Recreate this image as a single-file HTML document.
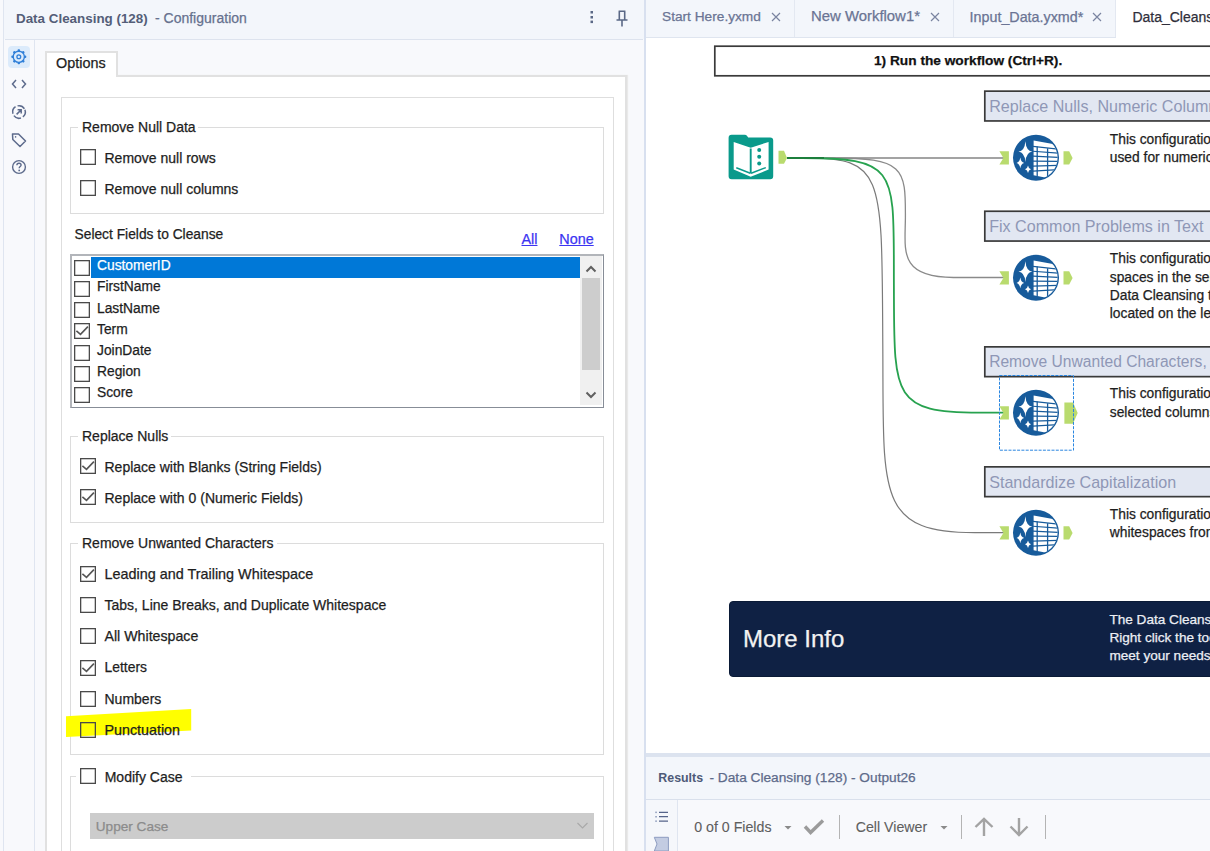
<!DOCTYPE html>
<html><head><meta charset="utf-8">
<style>
html,body{margin:0;padding:0;}
body{width:1210px;height:851px;overflow:hidden;position:relative;background:#fff;font-family:"Liberation Sans",sans-serif;}
.a{position:absolute;}
.t{position:absolute;line-height:1;white-space:nowrap;-webkit-text-stroke:0.25px currentColor;}
svg{overflow:visible;}
</style></head><body>
<div class="a" style="left:0px;top:0px;width:644px;height:851px;background:#f8f9fc;"></div>
<div class="a" style="left:3px;top:0px;width:1px;height:851px;background:#dfe5f0;"></div>
<div class="a" style="left:4px;top:0px;width:640px;height:39px;background:#f3f6fb;"></div>
<div class="a" style="left:5px;top:39px;width:638px;height:1px;background:#dde3ee;"></div>
<div class="t" style="left:16px;top:11.66px;font-size:13.4px;color:#545e78;font-weight:bold;-webkit-text-stroke:0;">Data Cleansing (128)</div>
<div class="t" style="left:155px;top:11.15px;font-size:14px;color:#66718e;">- Configuration</div>
<svg class="a" style="left:588px;top:8px" width="8" height="18" viewBox="0 0 8 18"><rect x="2.5" y="3" width="2.5" height="2.5" fill="#5a6886"/><rect x="2.5" y="8" width="2.5" height="2.5" fill="#5a6886"/><rect x="2.5" y="12.6" width="2.5" height="2.5" fill="#5a6886"/></svg>
<svg class="a" style="left:614px;top:8px" width="16" height="22" viewBox="0 0 16 22"><path d="M4.6 3.2 H11.4 M5.3 3.2 V11.5 M10.7 3.2 V11.5 M2.5 12 H13.5 M8 12 V18.4" stroke="#5a6886" stroke-width="1.6" fill="none"/></svg>
<div class="a" style="left:34px;top:40px;width:1px;height:811px;background:#dfe5f0;"></div>
<div class="a" style="left:8px;top:46px;width:22px;height:22px;background:#dcebfb;border-radius:4px;"></div>
<svg class="a" style="left:10px;top:48px" width="18" height="18" viewBox="-9 -9 18 18"><g transform="translate(-0.2,-0.2)"><circle cx="0" cy="0" r="5.6" fill="none" stroke="#2f7fd8" stroke-width="1.35"/><rect x="-1.25" y="-7.5" width="2.5" height="2.3" rx="1" fill="#2f7fd8" transform="rotate(0)"/><rect x="-1.25" y="-7.5" width="2.5" height="2.3" rx="1" fill="#2f7fd8" transform="rotate(45)"/><rect x="-1.25" y="-7.5" width="2.5" height="2.3" rx="1" fill="#2f7fd8" transform="rotate(90)"/><rect x="-1.25" y="-7.5" width="2.5" height="2.3" rx="1" fill="#2f7fd8" transform="rotate(135)"/><rect x="-1.25" y="-7.5" width="2.5" height="2.3" rx="1" fill="#2f7fd8" transform="rotate(180)"/><rect x="-1.25" y="-7.5" width="2.5" height="2.3" rx="1" fill="#2f7fd8" transform="rotate(225)"/><rect x="-1.25" y="-7.5" width="2.5" height="2.3" rx="1" fill="#2f7fd8" transform="rotate(270)"/><rect x="-1.25" y="-7.5" width="2.5" height="2.3" rx="1" fill="#2f7fd8" transform="rotate(315)"/><circle cx="0" cy="0" r="1.9" fill="none" stroke="#2f7fd8" stroke-width="1.3"/></g></svg>
<svg class="a" style="left:10px;top:76px" width="18" height="16" viewBox="0 0 18 16"><path d="M6 4 L2.5 8 L6 12 M12 4 L15.5 8 L12 12" fill="none" stroke="#5d6b8c" stroke-width="1.5"/></svg>
<svg class="a" style="left:10px;top:103px" width="18" height="18" viewBox="0 0 18 18"><circle cx="9" cy="9" r="6.3" fill="none" stroke="#5d6b8c" stroke-width="1.5" stroke-dasharray="7.6 2.3" transform="rotate(-20 9 9)"/><path d="M6.6 11.4 L11 7 M7.6 6.8 H11.2 V10.4" fill="none" stroke="#5d6b8c" stroke-width="1.5"/></svg>
<svg class="a" style="left:10px;top:131px" width="18" height="18" viewBox="0 0 18 18"><path d="M2.5 3 L8.5 3 L15.5 10 L10 15.5 L2.8 8.5 Z" fill="none" stroke="#5d6b8c" stroke-width="1.5" stroke-linejoin="round"/><circle cx="5.6" cy="5.9" r="0.8" fill="#5d6b8c"/></svg>
<svg class="a" style="left:10px;top:158px" width="18" height="18" viewBox="0 0 18 18"><circle cx="9" cy="9" r="6.4" fill="none" stroke="#5d6b8c" stroke-width="1.4"/><path d="M6.9 7.2 C6.9 5.9 7.8 5.2 9 5.2 C10.2 5.2 11.1 6 11.1 7.1 C11.1 8.5 9.2 8.6 9.2 10.2" fill="none" stroke="#5d6b8c" stroke-width="1.4"/><circle cx="9.2" cy="12.4" r="0.9" fill="#5d6b8c"/></svg>
<div class="a" style="left:45px;top:75px;width:582px;height:800px;background:#fff;border:2px solid #e1e1e1;box-sizing:border-box;box-shadow:1px 0 1px #e9e9e9;"></div>
<div class="a" style="left:45px;top:51px;width:73px;height:26px;background:#fff;border:2px solid #e1e1e1;border-bottom:none;box-sizing:border-box;"></div>
<div class="t" style="left:56px;top:55.81px;font-size:14.4px;color:#1e1e1e;">Options</div>
<div class="a" style="left:61px;top:97px;width:553px;height:800px;background:#fff;border:1px solid #dedede;box-sizing:border-box;"></div>
<div class="a" style="left:70px;top:127px;width:534px;height:87px;border:1px solid #dcdcdc;box-sizing:border-box;"></div>
<div class="a" style="left:78px;top:126px;width:120px;height:3px;background:#fff;"></div>
<div class="t" style="left:82px;top:119.65px;font-size:14px;color:#1e1e1e;">Remove Null Data</div>
<svg class="a" style="left:80px;top:149px" width="16" height="16" viewBox="0 0 16 16"><rect x="0.65" y="0.65" width="14.7" height="14.7" fill="none" stroke="#4a4a4a" stroke-width="1.3"/></svg>
<div class="t" style="left:104.5px;top:151.15px;font-size:14px;color:#1e1e1e;">Remove null rows</div>
<svg class="a" style="left:80px;top:180px" width="16" height="16" viewBox="0 0 16 16"><rect x="0.65" y="0.65" width="14.7" height="14.7" fill="none" stroke="#4a4a4a" stroke-width="1.3"/></svg>
<div class="t" style="left:104.5px;top:182.15px;font-size:14px;color:#1e1e1e;">Remove null columns</div>
<div class="t" style="left:74.5px;top:227.82px;font-size:13.8px;color:#1e1e1e;">Select Fields to Cleanse</div>
<div class="t" style="left:521.5px;top:231.61px;font-size:14.4px;color:#3b34f2;text-decoration:underline;">All</div>
<div class="t" style="left:559.3px;top:231.61px;font-size:14.4px;color:#3b34f2;text-decoration:underline;">None</div>
<div class="a" style="left:70px;top:254px;width:534px;height:154px;background:#fff;border-top:2px solid #b2b5ba;border-left:2px solid #b2b5ba;border-right:1px solid #878d97;border-bottom:1px solid #878d97;box-sizing:border-box;"></div>
<div class="a" style="left:91px;top:257px;width:489px;height:21px;background:#0078d7;"></div>
<svg class="a" style="left:74px;top:260px" width="16" height="16" viewBox="0 0 16 16"><rect x="0.65" y="0.65" width="14.7" height="14.7" fill="none" stroke="#4a4a4a" stroke-width="1.3"/></svg>
<div class="t" style="left:97px;top:259.32px;font-size:13.8px;color:#fff;">CustomerID</div>
<svg class="a" style="left:74px;top:281.15px" width="16" height="16" viewBox="0 0 16 16"><rect x="0.65" y="0.65" width="14.7" height="14.7" fill="none" stroke="#4a4a4a" stroke-width="1.3"/></svg>
<div class="t" style="left:97px;top:280.47px;font-size:13.8px;color:#1e1e1e;">FirstName</div>
<svg class="a" style="left:74px;top:302.3px" width="16" height="16" viewBox="0 0 16 16"><rect x="0.65" y="0.65" width="14.7" height="14.7" fill="none" stroke="#4a4a4a" stroke-width="1.3"/></svg>
<div class="t" style="left:97px;top:301.62px;font-size:13.8px;color:#1e1e1e;">LastName</div>
<svg class="a" style="left:74px;top:323.45px" width="16" height="16" viewBox="0 0 16 16"><rect x="0.65" y="0.65" width="14.7" height="14.7" fill="none" stroke="#4a4a4a" stroke-width="1.3"/><path d="M2.4 7.8 L6.5 11.3 L13.9 3.6" fill="none" stroke="#555" stroke-width="1.6"/></svg>
<div class="t" style="left:97px;top:322.77px;font-size:13.8px;color:#1e1e1e;">Term</div>
<svg class="a" style="left:74px;top:344.6px" width="16" height="16" viewBox="0 0 16 16"><rect x="0.65" y="0.65" width="14.7" height="14.7" fill="none" stroke="#4a4a4a" stroke-width="1.3"/></svg>
<div class="t" style="left:97px;top:343.92px;font-size:13.8px;color:#1e1e1e;">JoinDate</div>
<svg class="a" style="left:74px;top:365.75px" width="16" height="16" viewBox="0 0 16 16"><rect x="0.65" y="0.65" width="14.7" height="14.7" fill="none" stroke="#4a4a4a" stroke-width="1.3"/></svg>
<div class="t" style="left:97px;top:365.07px;font-size:13.8px;color:#1e1e1e;">Region</div>
<svg class="a" style="left:74px;top:386.9px" width="16" height="16" viewBox="0 0 16 16"><rect x="0.65" y="0.65" width="14.7" height="14.7" fill="none" stroke="#4a4a4a" stroke-width="1.3"/></svg>
<div class="t" style="left:97px;top:386.22px;font-size:13.8px;color:#1e1e1e;">Score</div>
<div class="a" style="left:580px;top:256px;width:21.5px;height:149px;background:#f0f0f0;"></div>
<div class="a" style="left:582px;top:278px;width:18px;height:92px;background:#cdcdcd;"></div>
<svg class="a" style="left:584px;top:263px" width="14" height="12" viewBox="0 0 14 12"><path d="M2.5 8.5 L7 4 L11.5 8.5" fill="none" stroke="#606060" stroke-width="2"/></svg>
<svg class="a" style="left:584px;top:389px" width="14" height="12" viewBox="0 0 14 12"><path d="M2.5 3.5 L7 8 L11.5 3.5" fill="none" stroke="#606060" stroke-width="2"/></svg>
<div class="a" style="left:70px;top:436px;width:534px;height:87px;border:1px solid #dcdcdc;box-sizing:border-box;"></div>
<div class="a" style="left:78px;top:435px;width:93px;height:3px;background:#fff;"></div>
<div class="t" style="left:82px;top:429.15px;font-size:14px;color:#1e1e1e;">Replace Nulls</div>
<svg class="a" style="left:80px;top:458px" width="16" height="16" viewBox="0 0 16 16"><rect x="0.65" y="0.65" width="14.7" height="14.7" fill="none" stroke="#4a4a4a" stroke-width="1.3"/><path d="M2.4 7.8 L6.5 11.3 L13.9 3.6" fill="none" stroke="#555" stroke-width="1.6"/></svg>
<div class="t" style="left:104.5px;top:459.65px;font-size:14px;color:#1e1e1e;">Replace with Blanks (String Fields)</div>
<svg class="a" style="left:80px;top:489px" width="16" height="16" viewBox="0 0 16 16"><rect x="0.65" y="0.65" width="14.7" height="14.7" fill="none" stroke="#4a4a4a" stroke-width="1.3"/><path d="M2.4 7.8 L6.5 11.3 L13.9 3.6" fill="none" stroke="#555" stroke-width="1.6"/></svg>
<div class="t" style="left:104.5px;top:490.65px;font-size:14px;color:#1e1e1e;">Replace with 0 (Numeric Fields)</div>
<div class="a" style="left:70px;top:543px;width:534px;height:212px;border:1px solid #dcdcdc;box-sizing:border-box;"></div>
<div class="a" style="left:78px;top:542px;width:199px;height:3px;background:#fff;"></div>
<div class="t" style="left:82px;top:536.15px;font-size:14px;color:#1e1e1e;">Remove Unwanted Characters</div>
<svg class="a" style="left:0;top:0" width="300" height="851"><path d="M66 716.3 L191.2 708.9 L191.2 730.5 L66 736.9 Z" fill="#ffff00"/></svg>
<svg class="a" style="left:80px;top:566px" width="16" height="16" viewBox="0 0 16 16"><rect x="0.65" y="0.65" width="14.7" height="14.7" fill="none" stroke="#4a4a4a" stroke-width="1.3"/><path d="M2.4 7.8 L6.5 11.3 L13.9 3.6" fill="none" stroke="#555" stroke-width="1.6"/></svg>
<div class="t" style="left:104.5px;top:566.81px;font-size:14.4px;color:#1e1e1e;">Leading and Trailing Whitespace</div>
<svg class="a" style="left:80px;top:597px" width="16" height="16" viewBox="0 0 16 16"><rect x="0.65" y="0.65" width="14.7" height="14.7" fill="none" stroke="#4a4a4a" stroke-width="1.3"/></svg>
<div class="t" style="left:104.5px;top:598.30px;font-size:14px;color:#1e1e1e;">Tabs, Line Breaks, and Duplicate Whitespace</div>
<svg class="a" style="left:80px;top:628px" width="16" height="16" viewBox="0 0 16 16"><rect x="0.65" y="0.65" width="14.7" height="14.7" fill="none" stroke="#4a4a4a" stroke-width="1.3"/></svg>
<div class="t" style="left:104.5px;top:629.28px;font-size:14.2px;color:#1e1e1e;">All Whitespace</div>
<svg class="a" style="left:80px;top:660px" width="16" height="16" viewBox="0 0 16 16"><rect x="0.65" y="0.65" width="14.7" height="14.7" fill="none" stroke="#4a4a4a" stroke-width="1.3"/><path d="M2.4 7.8 L6.5 11.3 L13.9 3.6" fill="none" stroke="#555" stroke-width="1.6"/></svg>
<div class="t" style="left:104.5px;top:660.68px;font-size:13.9px;color:#1e1e1e;">Letters</div>
<svg class="a" style="left:80px;top:691px" width="16" height="16" viewBox="0 0 16 16"><rect x="0.65" y="0.65" width="14.7" height="14.7" fill="none" stroke="#4a4a4a" stroke-width="1.3"/></svg>
<div class="t" style="left:104.5px;top:691.75px;font-size:14px;color:#1e1e1e;">Numbers</div>
<svg class="a" style="left:80px;top:722px" width="16" height="16" viewBox="0 0 16 16"><rect x="0.65" y="0.65" width="14.7" height="14.7" fill="none" stroke="#4a4a4a" stroke-width="1.3"/></svg>
<div class="t" style="left:104.5px;top:722.65px;font-size:14.3px;color:#1e1e1e;">Punctuation</div>
<div class="a" style="left:70px;top:776px;width:534px;height:200px;border:1px solid #dcdcdc;box-sizing:border-box;"></div>
<div class="a" style="left:76px;top:766px;width:115px;height:20px;background:#fff;"></div>
<svg class="a" style="left:80px;top:768px" width="16" height="16" viewBox="0 0 16 16"><rect x="0.65" y="0.65" width="14.7" height="14.7" fill="none" stroke="#4a4a4a" stroke-width="1.3"/></svg>
<div class="t" style="left:104.7px;top:769.95px;font-size:14px;color:#1e1e1e;">Modify Case</div>
<div class="a" style="left:90px;top:813px;width:504px;height:26px;background:#cccccc;"></div>
<div class="t" style="left:95.8px;top:819.69px;font-size:13.6px;color:#8b8b8b;">Upper Case</div>
<svg class="a" style="left:576px;top:821px" width="13" height="9" viewBox="0 0 13 9"><path d="M1.5 2 L6.5 7 L11.5 2" fill="none" stroke="#a9a9a9" stroke-width="1.2"/></svg>
<div class="a" style="left:644px;top:0px;width:2px;height:851px;background:#d8e0ef;"></div>
<div class="a" style="left:646px;top:0px;width:564px;height:37px;background:#f3f6fb;"></div>
<div class="a" style="left:646px;top:37px;width:470px;height:1px;background:#dfe5ef;"></div>
<div class="a" style="left:1116px;top:0px;width:94px;height:38px;background:#fff;"></div>
<div class="a" style="left:794px;top:0px;width:1px;height:37px;background:#e3e8f1;"></div>
<div class="a" style="left:953px;top:0px;width:1px;height:37px;background:#e3e8f1;"></div>
<div class="a" style="left:1115px;top:0px;width:1px;height:37px;background:#e3e8f1;"></div>
<div class="t" style="left:662px;top:10.20px;font-size:13.7px;color:#6a7494;">Start Here.yxmd</div>
<div class="t" style="left:811px;top:9.19px;font-size:14.9px;color:#6a7494;">New Workflow1*</div>
<div class="t" style="left:969.6px;top:9.70px;font-size:14.3px;color:#6a7494;">Input_Data.yxmd*</div>
<div class="t" style="left:1132.4px;top:9.95px;font-size:14px;color:#2e2e3a;">Data_Cleansing.yxmd</div>
<svg class="a" style="left:770.5px;top:12px" width="10" height="10" viewBox="0 0 10 10"><path d="M1 1 L9 9 M9 1 L1 9" stroke="#7a84a0" stroke-width="1.2"/></svg>
<svg class="a" style="left:929.5px;top:12px" width="10" height="10" viewBox="0 0 10 10"><path d="M1 1 L9 9 M9 1 L1 9" stroke="#7a84a0" stroke-width="1.2"/></svg>
<svg class="a" style="left:1091.5px;top:12px" width="10" height="10" viewBox="0 0 10 10"><path d="M1 1 L9 9 M9 1 L1 9" stroke="#7a84a0" stroke-width="1.2"/></svg>
<div class="a" style="left:646px;top:38px;width:564px;height:715px;background:#fff;"></div>
<svg class="a" style="left:713px;top:44px" width="520" height="34"><rect x="1.8" y="2.2" width="515" height="29.6" fill="#fff" stroke="#3a3a3a" stroke-width="1.7"/></svg>
<div class="t" style="left:874px;top:53.60px;font-size:13.7px;color:#111;font-weight:bold;">1) Run the workflow (Ctrl+R).</div>
<svg class="a" style="left:983px;top:89px" width="260" height="40"><rect x="1.8" y="2.15" width="255" height="29.80" fill="#e2e7f2" stroke="#3a3a3a" stroke-width="1.7"/></svg>
<div class="t" style="left:989.2px;top:98.07px;font-size:16.1px;color:#8f97b6;-webkit-text-stroke:0;">Replace Nulls, Numeric Columns</div>
<svg class="a" style="left:983px;top:209px" width="260" height="40"><rect x="1.8" y="2.25" width="255" height="29.80" fill="#e2e7f2" stroke="#3a3a3a" stroke-width="1.7"/></svg>
<div class="t" style="left:989.2px;top:218.17px;font-size:16.1px;color:#8f97b6;-webkit-text-stroke:0;">Fix Common Problems in Text</div>
<svg class="a" style="left:983px;top:345px" width="260" height="40"><rect x="1.8" y="1.85" width="255" height="29.80" fill="#e2e7f2" stroke="#3a3a3a" stroke-width="1.7"/></svg>
<div class="t" style="left:989.2px;top:354.19px;font-size:15.6px;color:#8f97b6;-webkit-text-stroke:0;">Remove Unwanted Characters, Letters</div>
<svg class="a" style="left:983px;top:465px" width="260" height="40"><rect x="1.8" y="1.85" width="255" height="29.80" fill="#e2e7f2" stroke="#3a3a3a" stroke-width="1.7"/></svg>
<div class="t" style="left:989.2px;top:473.77px;font-size:16.1px;color:#8f97b6;-webkit-text-stroke:0;">Standardize Capitalization</div>
<svg class="a" style="left:0;top:0" width="1210" height="851"><path d="M787 158 L1004 158" stroke="#a3a3a3" stroke-width="2" fill="none"/><path d="M787 158 L830.3 158.0 C904.3 158.0 905.7 167.2 905.4 217.8 C905.2 250.1 898.1 277.5 953.5 277.5 L1004 277.5" stroke="#8a8a8a" stroke-width="1.3" fill="none"/><path d="M787 158 L806.3 158.0 C885.2 158.0 881.7 176.1 882.8 345.4 C883.8 493.1 875.6 532.7 974.6 532.7 L1004 532.7" stroke="#7a7a7a" stroke-width="1.2" fill="none"/><path d="M787 158 L802.0 158.0 C900.1 158.0 893.4 170.0 893.9 285.4 C894.3 395.8 891.1 412.7 979.2 412.7 L1004 412.7" stroke="#27a24f" stroke-width="1.8" fill="none"/><path d="M787 158 L824 158" stroke="#1c7f3c" stroke-width="2" fill="none"/></svg>
<svg class="a" style="left:726px;top:132px" width="50" height="50" viewBox="0 0 50 50"><path d="M2.6 5.8 Q2.6 2.8 5.6 2.8 L18.5 2.8 Q20.3 2.8 21.3 4.2 L22.2 5.6 L44.2 5.6 Q47.2 5.6 47.2 8.6 L47.2 44.2 Q47.2 47.2 44.2 47.2 L5.6 47.2 Q2.6 47.2 2.6 44.2 Z" fill="#0a9a8b"/><path d="M7.7 9.9 L24.7 15.8 L42.6 9.9 L42.6 37.6 L24.7 44.7 L7.7 37.6 Z" fill="#fff"/><path d="M24.7 16.5 V41.5" stroke="#0a9a8b" stroke-width="1.9" fill="none"/><path d="M10.3 35.8 L24.3 41.2 M25.1 41.2 L39.8 35.6" stroke="#0a9a8b" stroke-width="1.5" fill="none"/><circle cx="33.2" cy="18" r="2" fill="#0a9a8b"/><circle cx="33.2" cy="24.8" r="2" fill="#0a9a8b"/><circle cx="33.2" cy="31.4" r="2" fill="#0a9a8b"/></svg>
<svg class="a" style="left:778px;top:150px" width="12" height="16" viewBox="0 0 12 16"><path d="M0.5 0.7 L6 0.7 L9 8 L6 13.7 L0.5 13.7 Z" fill="#b9db6e"/></svg>
<svg class="a" style="left:995px;top:132.5px" width="90" height="50" viewBox="0 0 90 50"><path d="M4.4 18.3 L13.9 18.3 L13.9 31.6 L4.4 31.6 L8.4 25 Z" fill="#b9db6e"/><path d="M68.5 18.3 L74.2 18.3 L77.6 25 L74.2 31.6 L68.5 31.6 Z" fill="#b9db6e"/><circle cx="41" cy="24.8" r="23" fill="#175b9b"/><defs><clipPath id="cc157"><circle cx="41" cy="24.8" r="21.6"/></clipPath></defs><g clip-path="url(#cc157)"><path d="M38.6 7.6 L56.5 10.8 L66 14 L66 40 L50 44.5 L38.6 42.3 Z" fill="#fff"/><path d="M38 13.30 L64 16.20" stroke="#175b9b" stroke-width="1.25"/><path d="M38 18.25 L64 20.25" stroke="#175b9b" stroke-width="1.25"/><path d="M38 23.20 L64 24.30" stroke="#175b9b" stroke-width="1.25"/><path d="M38 28.15 L64 28.35" stroke="#175b9b" stroke-width="1.25"/><path d="M38 33.10 L64 32.40" stroke="#175b9b" stroke-width="1.25"/><path d="M38 38.05 L64 36.45" stroke="#175b9b" stroke-width="1.25"/><path d="M42.2 13.6 V43 M52.6 15.2 V44" stroke="#175b9b" stroke-width="1.3"/></g><path d="M30.40 8.20 Q31.15 17.85 37.30 18.60 Q31.15 19.35 30.40 29.00 Q29.65 19.35 23.50 18.60 Q29.65 17.85 30.40 8.20 Z" fill="#fff"/><path d="M25.30 24.50 Q26.00 29.20 29.20 29.90 Q26.00 30.60 25.30 35.30 Q24.60 30.60 21.40 29.90 Q24.60 29.20 25.30 24.50 Z" fill="#fff"/><path d="M33.00 32.40 Q33.55 35.65 36.00 36.20 Q33.55 36.75 33.00 40.00 Q32.45 36.75 30.00 36.20 Q32.45 35.65 33.00 32.40 Z" fill="#fff"/></svg>
<svg class="a" style="left:995px;top:252.5px" width="90" height="50" viewBox="0 0 90 50"><path d="M4.4 18.3 L13.9 18.3 L13.9 31.6 L4.4 31.6 L8.4 25 Z" fill="#b9db6e"/><path d="M68.5 18.3 L74.2 18.3 L77.6 25 L74.2 31.6 L68.5 31.6 Z" fill="#b9db6e"/><circle cx="41" cy="24.8" r="23" fill="#175b9b"/><defs><clipPath id="cc277"><circle cx="41" cy="24.8" r="21.6"/></clipPath></defs><g clip-path="url(#cc277)"><path d="M38.6 7.6 L56.5 10.8 L66 14 L66 40 L50 44.5 L38.6 42.3 Z" fill="#fff"/><path d="M38 13.30 L64 16.20" stroke="#175b9b" stroke-width="1.25"/><path d="M38 18.25 L64 20.25" stroke="#175b9b" stroke-width="1.25"/><path d="M38 23.20 L64 24.30" stroke="#175b9b" stroke-width="1.25"/><path d="M38 28.15 L64 28.35" stroke="#175b9b" stroke-width="1.25"/><path d="M38 33.10 L64 32.40" stroke="#175b9b" stroke-width="1.25"/><path d="M38 38.05 L64 36.45" stroke="#175b9b" stroke-width="1.25"/><path d="M42.2 13.6 V43 M52.6 15.2 V44" stroke="#175b9b" stroke-width="1.3"/></g><path d="M30.40 8.20 Q31.15 17.85 37.30 18.60 Q31.15 19.35 30.40 29.00 Q29.65 19.35 23.50 18.60 Q29.65 17.85 30.40 8.20 Z" fill="#fff"/><path d="M25.30 24.50 Q26.00 29.20 29.20 29.90 Q26.00 30.60 25.30 35.30 Q24.60 30.60 21.40 29.90 Q24.60 29.20 25.30 24.50 Z" fill="#fff"/><path d="M33.00 32.40 Q33.55 35.65 36.00 36.20 Q33.55 36.75 33.00 40.00 Q32.45 36.75 30.00 36.20 Q32.45 35.65 33.00 32.40 Z" fill="#fff"/></svg>
<svg class="a" style="left:995px;top:387.5px" width="90" height="50" viewBox="0 0 90 50"><path d="M4.4 18.3 L13.9 18.3 L13.9 31.6 L4.4 31.6 L8.4 25 Z" fill="#b9db6e"/><path d="M69.4 14.5 L78 14.5 L82.7 25 L78 35.7 L69.4 35.7 Z" fill="#b9db6e"/><circle cx="41" cy="24.8" r="23" fill="#175b9b"/><defs><clipPath id="cc412"><circle cx="41" cy="24.8" r="21.6"/></clipPath></defs><g clip-path="url(#cc412)"><path d="M38.6 7.6 L56.5 10.8 L66 14 L66 40 L50 44.5 L38.6 42.3 Z" fill="#fff"/><path d="M38 13.30 L64 16.20" stroke="#175b9b" stroke-width="1.25"/><path d="M38 18.25 L64 20.25" stroke="#175b9b" stroke-width="1.25"/><path d="M38 23.20 L64 24.30" stroke="#175b9b" stroke-width="1.25"/><path d="M38 28.15 L64 28.35" stroke="#175b9b" stroke-width="1.25"/><path d="M38 33.10 L64 32.40" stroke="#175b9b" stroke-width="1.25"/><path d="M38 38.05 L64 36.45" stroke="#175b9b" stroke-width="1.25"/><path d="M42.2 13.6 V43 M52.6 15.2 V44" stroke="#175b9b" stroke-width="1.3"/></g><path d="M30.40 8.20 Q31.15 17.85 37.30 18.60 Q31.15 19.35 30.40 29.00 Q29.65 19.35 23.50 18.60 Q29.65 17.85 30.40 8.20 Z" fill="#fff"/><path d="M25.30 24.50 Q26.00 29.20 29.20 29.90 Q26.00 30.60 25.30 35.30 Q24.60 30.60 21.40 29.90 Q24.60 29.20 25.30 24.50 Z" fill="#fff"/><path d="M33.00 32.40 Q33.55 35.65 36.00 36.20 Q33.55 36.75 33.00 40.00 Q32.45 36.75 30.00 36.20 Q32.45 35.65 33.00 32.40 Z" fill="#fff"/></svg>
<svg class="a" style="left:995px;top:507.5px" width="90" height="50" viewBox="0 0 90 50"><path d="M4.4 18.3 L13.9 18.3 L13.9 31.6 L4.4 31.6 L8.4 25 Z" fill="#b9db6e"/><path d="M68.5 18.3 L74.2 18.3 L77.6 25 L74.2 31.6 L68.5 31.6 Z" fill="#b9db6e"/><circle cx="41" cy="24.8" r="23" fill="#175b9b"/><defs><clipPath id="cc532"><circle cx="41" cy="24.8" r="21.6"/></clipPath></defs><g clip-path="url(#cc532)"><path d="M38.6 7.6 L56.5 10.8 L66 14 L66 40 L50 44.5 L38.6 42.3 Z" fill="#fff"/><path d="M38 13.30 L64 16.20" stroke="#175b9b" stroke-width="1.25"/><path d="M38 18.25 L64 20.25" stroke="#175b9b" stroke-width="1.25"/><path d="M38 23.20 L64 24.30" stroke="#175b9b" stroke-width="1.25"/><path d="M38 28.15 L64 28.35" stroke="#175b9b" stroke-width="1.25"/><path d="M38 33.10 L64 32.40" stroke="#175b9b" stroke-width="1.25"/><path d="M38 38.05 L64 36.45" stroke="#175b9b" stroke-width="1.25"/><path d="M42.2 13.6 V43 M52.6 15.2 V44" stroke="#175b9b" stroke-width="1.3"/></g><path d="M30.40 8.20 Q31.15 17.85 37.30 18.60 Q31.15 19.35 30.40 29.00 Q29.65 19.35 23.50 18.60 Q29.65 17.85 30.40 8.20 Z" fill="#fff"/><path d="M25.30 24.50 Q26.00 29.20 29.20 29.90 Q26.00 30.60 25.30 35.30 Q24.60 30.60 21.40 29.90 Q24.60 29.20 25.30 24.50 Z" fill="#fff"/><path d="M33.00 32.40 Q33.55 35.65 36.00 36.20 Q33.55 36.75 33.00 40.00 Q32.45 36.75 30.00 36.20 Q32.45 35.65 33.00 32.40 Z" fill="#fff"/></svg>
<svg class="a" style="left:999px;top:375px" width="76" height="77"><rect x="0.5" y="0.5" width="74" height="74.7" fill="none" stroke="#2a86e0" stroke-width="1" stroke-dasharray="3 1.3"/></svg>
<div class="t" style="left:1109.8px;top:132.82px;font-size:13.8px;color:#1e1e1e;white-space:nowrap;">This configuration replaces nulls with 0 and is</div>
<div class="t" style="left:1109.8px;top:150.82px;font-size:13.8px;color:#1e1e1e;white-space:nowrap;">used for numeric columns in the data.</div>
<div class="t" style="left:1109.8px;top:252.32px;font-size:13.8px;color:#1e1e1e;white-space:nowrap;">This configuration removes leading and trailing</div>
<div class="t" style="left:1109.8px;top:270.52px;font-size:13.8px;color:#1e1e1e;white-space:nowrap;">spaces in the selected columns. Use the</div>
<div class="t" style="left:1109.8px;top:288.72px;font-size:13.8px;color:#1e1e1e;white-space:nowrap;">Data Cleansing tool configuration window</div>
<div class="t" style="left:1109.8px;top:306.92px;font-size:13.8px;color:#1e1e1e;white-space:nowrap;">located on the left side of the screen.</div>
<div class="t" style="left:1109.8px;top:387.32px;font-size:13.8px;color:#1e1e1e;white-space:nowrap;">This configuration removes letters from the</div>
<div class="t" style="left:1109.8px;top:405.52px;font-size:13.8px;color:#1e1e1e;white-space:nowrap;">selected columns.</div>
<div class="t" style="left:1109.8px;top:507.52px;font-size:13.8px;color:#1e1e1e;white-space:nowrap;">This configuration removes leading and trailing</div>
<div class="t" style="left:1109.8px;top:525.72px;font-size:13.8px;color:#1e1e1e;white-space:nowrap;">whitespaces from the selected columns.</div>
<div class="a" style="left:729px;top:600.5px;width:520px;height:76px;background:#0f2144;border:1px solid #0a1a36;border-radius:4px;box-sizing:border-box;"></div>
<div class="t" style="left:743px;top:626.68px;font-size:24px;color:#f2f2f2;">More Info</div>
<div class="t" style="left:1109.4px;top:612.69px;font-size:13.6px;color:#eceef4;white-space:nowrap;">The Data Cleansing tool can fix common data quality issues.</div>
<div class="t" style="left:1109.4px;top:630.79px;font-size:13.6px;color:#eceef4;white-space:nowrap;">Right click the tool and select Help to learn more and to</div>
<div class="t" style="left:1109.4px;top:648.89px;font-size:13.6px;color:#eceef4;white-space:nowrap;">meet your needs.</div>
<div class="a" style="left:646px;top:753px;width:564px;height:4px;background:#dce3ef;"></div>
<div class="a" style="left:646px;top:757px;width:564px;height:42px;background:#f3f6fb;"></div>
<div class="a" style="left:646px;top:799px;width:564px;height:1px;background:#d9e0ec;"></div>
<div class="a" style="left:646px;top:800px;width:564px;height:51px;background:#f8f9fc;"></div>
<div class="a" style="left:646px;top:800px;width:31px;height:51px;background:#f5f7fb;"></div>
<div class="a" style="left:677px;top:800px;width:1px;height:51px;background:#dfe5f0;"></div>
<div class="t" style="left:658.3px;top:772.10px;font-size:12.4px;color:#4e5a78;font-weight:bold;-webkit-text-stroke:0;">Results</div>
<div class="t" style="left:709.5px;top:771.00px;font-size:13.7px;color:#5d6a8a;">- Data Cleansing (128) - Output26</div>
<svg class="a" style="left:652px;top:808px" width="20" height="18" viewBox="0 0 20 18"><rect x="3.3" y="3.6" width="1.5" height="1.5" fill="#8a98b8"/><rect x="3.3" y="8" width="1.5" height="1.5" fill="#8a98b8"/><rect x="3.3" y="12.4" width="1.5" height="1.5" fill="#8a98b8"/><path d="M7 4.3 H16 M7 8.7 H16 M7 13.1 H16" stroke="#56648a" stroke-width="1.3"/></svg>
<svg class="a" style="left:652px;top:835px" width="20" height="16" viewBox="0 0 20 16"><path d="M2.3 2.3 H16.4 V16 H2.3 L5 9 Z" fill="#c3cce2" stroke="#8d9cc0" stroke-width="1"/></svg>
<div class="t" style="left:694.2px;top:819.58px;font-size:14.2px;color:#5f5f5f;-webkit-text-stroke:0.1px currentColor;">0 of 0 Fields</div>
<svg class="a" style="left:782.5px;top:824.5px" width="10" height="6" viewBox="0 0 10 6"><path d="M1.5 1 L8.5 1 L5 4.6 Z" fill="#8a8a8a"/></svg>
<svg class="a" style="left:802px;top:817px" width="24" height="20" viewBox="0 0 24 20"><path d="M3 9.5 L8.6 15.5 L21 3.5" fill="none" stroke="#9b9b9b" stroke-width="3.4"/></svg>
<div class="a" style="left:839px;top:815px;width:1.2px;height:24px;background:#b4b4b4;"></div>
<div class="t" style="left:855.7px;top:819.58px;font-size:14.2px;color:#5f5f5f;-webkit-text-stroke:0.1px currentColor;">Cell Viewer</div>
<svg class="a" style="left:938.5px;top:824.5px" width="10" height="6" viewBox="0 0 10 6"><path d="M1.5 1 L8.5 1 L5 4.6 Z" fill="#8a8a8a"/></svg>
<div class="a" style="left:961px;top:815px;width:1.2px;height:24px;background:#b4b4b4;"></div>
<svg class="a" style="left:972px;top:816px" width="24" height="22" viewBox="0 0 24 22"><path d="M12 3 V20 M3.5 11 L12 2.8 L20.5 11" fill="none" stroke="#a3a3a3" stroke-width="2.4"/></svg>
<svg class="a" style="left:1007px;top:816px" width="24" height="22" viewBox="0 0 24 22"><path d="M12 2 V19 M3.5 10.5 L12 19 L20.5 10.5" fill="none" stroke="#a3a3a3" stroke-width="2.4"/></svg>
<div class="a" style="left:1044.5px;top:815px;width:1.2px;height:24px;background:#b4b4b4;"></div>
</body></html>
